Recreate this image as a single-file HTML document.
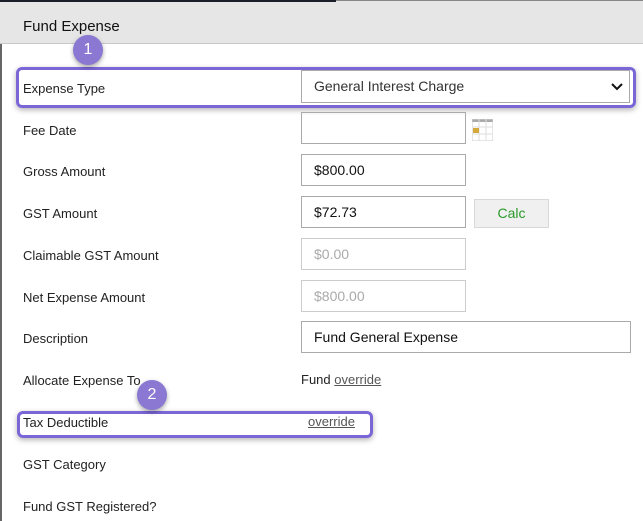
<!DOCTYPE html><html><head><style>
body{margin:0;width:643px;height:521px;overflow:hidden;background:#fff;font-family:"Liberation Sans",Arial,sans-serif;font-size:13px;color:#222;position:relative}
.hdr{position:absolute;left:0;top:0;width:643px;height:44px;background:#e6e6e6;border-bottom:1px solid #c8c8c8;box-sizing:border-box}
.hdr span{position:absolute;left:23px;top:18px;font-size:15px;color:#111}
.l{position:absolute;left:23px;font-size:13px}
.in{position:absolute;left:301px;width:165px;height:32px;border:1px solid #aaa;box-sizing:border-box;font-size:14px;padding:0 0 0 12px;line-height:30px;color:#111}
.dis{color:#aaa;border-color:#ccc}
.box{position:absolute;border:3px solid #7b66d6;border-radius:6px;box-shadow:0 2px 6px rgba(0,0,0,.3)}
.badge{position:absolute;width:30px;height:30px;border-radius:50%;background:#8a78d2;color:#fff;text-align:center;line-height:30px;font-size:16px;box-shadow:0 2px 5px rgba(0,0,0,.35)}
a{color:#555;text-decoration:underline}
</style></head><body>
<div class="hdr"><span>Fund Expense</span></div>
<div style="position:absolute;left:0;top:0;width:336px;height:2px;background:#1a1f2a"></div>
<div style="position:absolute;left:336px;top:0;width:307px;height:1px;background:#888"></div>
<div style="position:absolute;left:0;top:44px;width:2px;height:477px;background:#666"></div>
<div class="box" style="left:16px;top:67px;width:614px;height:35px"></div>
<div class="badge" style="left:73px;top:35px">1</div>
<div class="l" style="top:81px">Expense Type</div>
<div class="in" style="top:70px;width:329px;height:33px;line-height:31px;color:#333">General Interest Charge
<svg style="position:absolute;right:6px;top:11px" width="12" height="9"><path d="M1 2l5 5 5-5" stroke="#111" stroke-width="2" fill="none"/></svg></div>
<div class="l" style="top:123px">Fee Date</div>
<div class="in" style="top:112px"></div>
<svg style="position:absolute;left:472px;top:119px" width="21" height="22"><rect x="0" y="0" width="21" height="3" fill="#aaa"/><rect x="0" y="0" width="21" height="22" fill="none" stroke="#ccc"/><path d="M7 0v22M14 0v22M0 8h21M0 15h21" stroke="#ddd"/><rect x="1" y="9" width="6" height="5" fill="#d4aa3a"/></svg>
<div class="l" style="top:164px">Gross Amount</div>
<div class="in" style="top:154px">$800.00</div>
<div class="l" style="top:206px">GST Amount</div>
<div class="in" style="top:196px">$72.73</div>
<div style="position:absolute;left:474px;top:199px;width:75px;height:29px;background:#f0f0f0;border:1px solid #d8d8d8;box-sizing:border-box;color:#2a9a2a;font-size:14px;text-align:center;line-height:27px">Calc</div>
<div class="l" style="top:248px">Claimable GST Amount</div>
<div class="in dis" style="top:238px">$0.00</div>
<div class="l" style="top:290px">Net Expense Amount</div>
<div class="in dis" style="top:280px">$800.00</div>
<div class="l" style="top:331px">Description</div>
<div class="in" style="top:321px;width:330px">Fund General Expense</div>
<div class="l" style="top:373px">Allocate Expense To</div>
<div style="position:absolute;left:301px;top:372px">Fund <a>override</a></div>
<div class="box" style="left:17px;top:411px;width:350px;height:21px"></div>
<div class="badge" style="left:137px;top:380px">2</div>
<div class="l" style="top:415px">Tax Deductible</div>
<div style="position:absolute;left:308px;top:414px"><a>override</a></div>
<div class="l" style="top:457px">GST Category</div>
<div class="l" style="top:499px">Fund GST Registered?</div>
</body></html>
